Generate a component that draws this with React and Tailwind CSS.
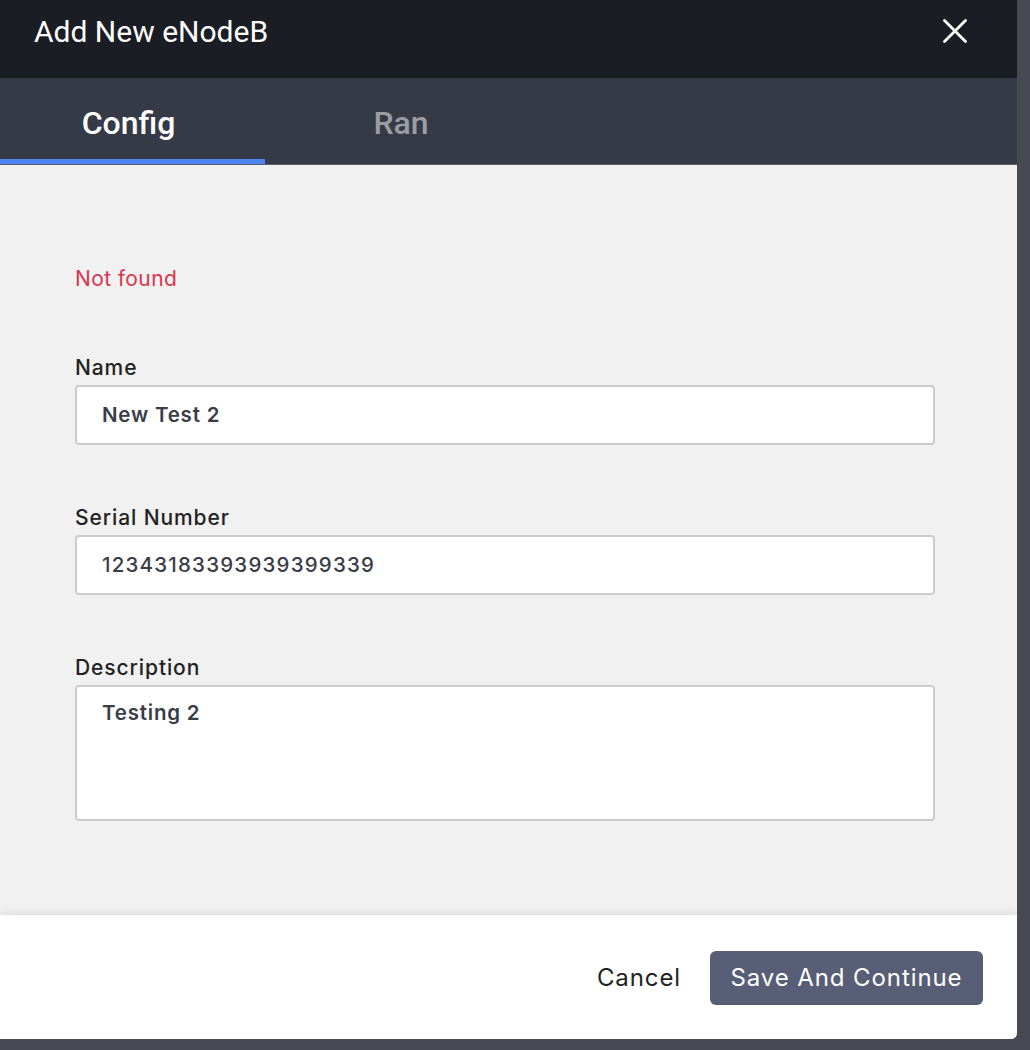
import React from "react";

export default function App() {
  return (
    <div className="w-[1030px] h-[1050px] bg-[#474a52] overflow-hidden" style={{ fontFamily: "Inter, 'Noto Sans', sans-serif" }}>
      <div className="w-[1017px] h-[1039px] flex flex-col bg-white rounded-br-[6px] overflow-hidden">
        {/* Header */}
        <div className="h-[78px] shrink-0 bg-[#1b1d25] flex items-center justify-between pl-[34px] pr-[50px]">
          <div className="text-white text-[30px] leading-none pb-[14px]" style={{ fontFamily: "Roboto, sans-serif" }}>Add New eNodeB</div>
          <svg width="24" height="24" viewBox="0 0 24 24" className="mb-[16px]">
            <path d="M1.5 1.5 L22.5 22.5 M22.5 1.5 L1.5 22.5" stroke="white" strokeWidth="2.8" strokeLinecap="round" />
          </svg>
        </div>
        {/* Tabs */}
        <div className="h-[87px] shrink-0 bg-[#363a47] flex border-b border-[#5a5e6a]" style={{ fontFamily: "Roboto, sans-serif" }}>
          <div className="w-[265px] flex flex-col">
            <div className="flex-1 flex items-center justify-center text-white text-[32px] font-medium pt-[8px] pr-[8px]">Config</div>
            <div className="h-[5px] bg-[#4c86f3]" />
          </div>
          <div className="w-[272px] flex flex-col">
            <div className="flex-1 flex items-center justify-center text-[#9b9da5] text-[32px] font-medium pt-[8px]">Ran</div>
            <div className="h-[5px]" />
          </div>
        </div>
        {/* Content */}
        <div className="flex-1 bg-[#f1f1f1] pl-[75px] pr-[82px] pt-[100px]">
          <div className="text-[#d7364b] text-[21px] leading-[28px] tracking-[0.4px]">Not found</div>
          <div className="mt-[62px] text-[#222] text-[21px] font-medium leading-[25px] tracking-[0.9px]">Name</div>
          <div className="mt-[5px] h-[60px] bg-white border-2 border-[#cbcbcb] rounded-[4px] flex items-center pl-[25px] text-[20.5px] font-semibold tracking-[0.8px] text-[#3a3d48]">New Test 2</div>
          <div className="mt-[60px] text-[#222] text-[21px] font-medium leading-[25px] tracking-[0.9px]">Serial Number</div>
          <div className="mt-[5px] h-[60px] bg-white border-2 border-[#cbcbcb] rounded-[4px] flex items-center pl-[25px] text-[20.5px] font-medium tracking-[1.2px] text-[#3a3d48]">12343183393939399339</div>
          <div className="mt-[60px] text-[#222] text-[21px] font-medium leading-[25px] tracking-[0.9px]">Description</div>
          <div className="mt-[5px] h-[136px] bg-white border-2 border-[#cbcbcb] rounded-[4px] pl-[25px] pt-[12px] text-[20.5px] leading-[28px] font-semibold tracking-[0.8px] text-[#3a3d48]">Testing 2</div>
        </div>
        {/* Footer */}
        <div className="h-[124px] shrink-0 bg-white flex items-center justify-end pr-[34px] shadow-[0_-3px_8px_rgba(0,0,0,0.07)] relative">
          <div className="text-[#222] text-[24px] tracking-[0.9px] mr-[29px] mt-[2px]">Cancel</div>
          <div className="h-[54px] w-[273px] bg-[#575e75] rounded-[6px] flex items-center justify-center text-white text-[24px] tracking-[0.9px] mt-[2px]">Save And Continue</div>
        </div>
      </div>
    </div>
  );
}
